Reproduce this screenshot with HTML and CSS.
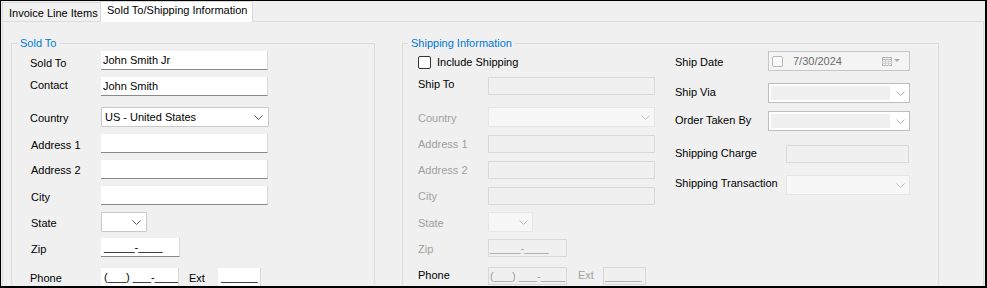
FILE: index.html
```html
<!DOCTYPE html>
<html>
<head>
<meta charset="utf-8">
<title>Sold To/Shipping Information</title>
<link rel="stylesheet" href="styles.css">
</head>
<body>
<div class="frame">
  <div class="tabs">
    <div class="tab">Invoice Line Items</div>
    <div class="tab active">Sold To/Shipping Information</div>
  </div>
  <div class="panel">
    <fieldset class="group sold">
      <legend>Sold To</legend>
      <div class="row mt1"><span class="lbl dy6">Sold To</span><div class="tb w167">John Smith Jr</div></div>
      <div class="row mt7"><span class="lbl dy2">Contact</span><div class="tb w167">John Smith</div></div>
      <div class="row mt11"><span class="lbl dy5">Country</span><div class="combo w168"><span class="val">US - United States</span><svg class="chev" width="9" height="5" viewBox="0 0 9 5"><polyline points="0.5,0.5 4.5,4.5 8.5,0.5" fill="none" stroke="#5a5a5a" stroke-width="1"/></svg></div></div>
      <div class="row mt7"><span class="lbl dy5 x1">Address 1</span><div class="tb w167"></div></div>
      <div class="row mt7"><span class="lbl dy4 x1">Address 2</span><div class="tb w167"></div></div>
      <div class="row mt7"><span class="lbl dy5 x1">City</span><div class="tb w167"></div></div>
      <div class="row mt7"><span class="lbl dy5 x1">State</span><div class="combo w46"><span class="val"></span><svg class="chev" width="9" height="5" viewBox="0 0 9 5"><polyline points="0.5,0.5 4.5,4.5 8.5,0.5" fill="none" stroke="#5a5a5a" stroke-width="1"/></svg></div></div>
      <div class="row mt6"><span class="lbl dy5 x1">Zip</span><div class="tb w79 mask">_____-____</div></div>
      <div class="row mt11"><span class="lbl dy4">Phone</span><div class="tb w78 mask">(___) ___-____</div><span class="ext dy4">Ext</span><div class="tb w43 mask ext-box">______</div></div>
    </fieldset>

    <fieldset class="group ship">
      <legend>Shipping Information</legend>
      <div class="cols">
        <div class="col-a">
          <div class="row mt6 chkrow"><span class="chk"></span><span class="chk-lbl">Include Shipping</span></div>
          <div class="row mt8"><span class="lbl dy1">Ship To</span><div class="dtb w167"></div></div>
          <div class="row mt12"><span class="lbl dy5 dis">Country</span><div class="dcombo w167"><svg class="chev" width="9" height="5" viewBox="0 0 9 5"><polyline points="0.5,0.5 4.5,4.5 8.5,0.5" fill="none" stroke="#c4c4c4" stroke-width="1"/></svg></div></div>
          <div class="row mt8"><span class="lbl dy3 dis">Address 1</span><div class="dtb w167"></div></div>
          <div class="row mt8"><span class="lbl dy3 dis">Address 2</span><div class="dtb w167"></div></div>
          <div class="row mt8"><span class="lbl dy3 dis">City</span><div class="dtb w167"></div></div>
          <div class="row mt7"><span class="lbl dy5 dis">State</span><div class="dcombo w45"><svg class="chev" width="9" height="5" viewBox="0 0 9 5"><polyline points="0.5,0.5 4.5,4.5 8.5,0.5" fill="none" stroke="#c4c4c4" stroke-width="1"/></svg></div></div>
          <div class="row mt7"><span class="lbl dy4 dis">Zip</span><div class="dtb w79 dmask">_____-____</div></div>
          <div class="row mt10"><span class="lbl dy2">Phone</span><div class="dtb w79 dmask">(___) ___-____</div><span class="ext2 dy2 dis">Ext</span><div class="dtb w43 dmask">______</div></div>
        </div>
        <div class="col-b">
          <div class="row mt1"><span class="rlbl dy5">Ship Date</span>
            <div class="date w142">
              <span class="dchk"></span>
              <span class="dval">7/30/2024</span>
              <svg class="cal" width="19" height="9" viewBox="0 0 19 9">
                <rect x="0.5" y="0.5" width="9" height="8" fill="#f4f4f4" stroke="#b4b4b4"/>
                <line x1="0" y1="2.5" x2="10" y2="2.5" stroke="#b4b4b4"/>
                <line x1="0" y1="4.5" x2="10" y2="4.5" stroke="#d0d0d0"/>
                <line x1="0" y1="6.5" x2="10" y2="6.5" stroke="#d0d0d0"/>
                <line x1="3.5" y1="2" x2="3.5" y2="9" stroke="#d0d0d0"/>
                <line x1="6.5" y1="2" x2="6.5" y2="9" stroke="#d0d0d0"/>
                <polygon points="12,2 18,2 15,5" fill="#a8a8a8"/>
              </svg>
            </div>
          </div>
          <div class="row mt12"><span class="rlbl dy3">Ship Via</span><div class="rcombo w142"><span class="inner"></span><svg class="chev" width="9" height="5" viewBox="0 0 9 5"><polyline points="0.5,0.5 4.5,4.5 8.5,0.5" fill="none" stroke="#b0b0b0" stroke-width="1"/></svg></div></div>
          <div class="row mt8"><span class="rlbl dy3">Order Taken By</span><div class="rcombo w142"><span class="inner"></span><svg class="chev" width="9" height="5" viewBox="0 0 9 5"><polyline points="0.5,0.5 4.5,4.5 8.5,0.5" fill="none" stroke="#b0b0b0" stroke-width="1"/></svg></div></div>
          <div class="row mt14"><span class="rlbl wide dy2">Shipping Charge</span><div class="dtb w123"></div></div>
          <div class="row mt12"><span class="rlbl wide dy2">Shipping Transaction</span><div class="dcombo w124"><svg class="chev" width="9" height="5" viewBox="0 0 9 5"><polyline points="0.5,0.5 4.5,4.5 8.5,0.5" fill="none" stroke="#c4c4c4" stroke-width="1"/></svg></div></div>
        </div>
      </div>
    </fieldset>
  </div>
</div>
</body>
</html>
```

FILE: styles.css
```css
* { box-sizing: border-box; }
html, body { margin: 0; padding: 0; }
body {
  font-family: "Liberation Sans", Arial, sans-serif;
  font-size: 11px;
  line-height: 13px;
  color: #000;
  background: #fff;
}

.frame {
  width: 987px;
  height: 288px;
  border-style: solid;
  border-color: #000;
  border-width: 1px 2px 2px 1px;
  background: #f0f0f0;
  overflow: hidden;
}

/* tabs */
.tabs {
  display: flex;
  align-items: flex-end;
  height: 20px;
  padding-left: 1px;
}
.tab {
  height: 19px;
  width: 99px;
  border: 1px solid #d9d9d9;
  border-bottom: none;
  padding: 4px 0 0 6px;
  background: #f0f0f0;
  white-space: nowrap;
}
.tab.active {
  position: relative;
  z-index: 1;
  width: 153px;
  height: 21px;
  margin-left: -1px;
  margin-bottom: -1px;
  padding-top: 2px;
  background: #fff;
}

/* panel */
.panel {
  margin-left: 1px;
  width: 982px;
  height: 300px;
  border: 1px solid #dcdcdc;
  display: flex;
  align-items: flex-start;
  gap: 27px;
  padding: 15px 0 0 8px;
}

.group {
  margin: 0;
  padding: 0;
  border: 1px solid #dcdcdc;
  min-width: 0;
  height: 300px;
}
.group legend {
  margin-left: 5px;
  padding: 0 3px;
  color: #0078d7;
  line-height: 13px;
}
.sold { width: 364px; }
.ship { width: 537px; }

.row { display: flex; align-items: flex-start; }
.mt1 { margin-top: 1px; }
.mt6 { margin-top: 6px; }
.mt7 { margin-top: 7px; }
.mt8 { margin-top: 8px; }
.mt10 { margin-top: 10px; }
.mt11 { margin-top: 11px; }
.mt12 { margin-top: 12px; }
.mt14 { margin-top: 14px; }

.dy1 { margin-top: 1px; }
.dy2 { margin-top: 2px; }
.dy3 { margin-top: 3px; }
.dy4 { margin-top: 4px; }
.dy5 { margin-top: 5px; }
.dy6 { margin-top: 6px; }

.lbl { flex: none; white-space: nowrap; }
.sold .lbl { width: 89px; padding-left: 18px; }
.sold .lbl.x1 { padding-left: 19px; }
.ship .lbl { width: 85px; padding-left: 15px; }
.dis { color: #a0a0a0; }

/* widths */
.w43 { width: 43px; }
.w45 { width: 45px; }
.w46 { width: 46px; }
.w78 { width: 78px; }
.w79 { width: 79px; }
.w123 { width: 123px; }
.w124 { width: 124px; }
.w142 { width: 142px; }
.w167 { width: 167px; }
.w168 { width: 168px; }

/* enabled textbox */
.tb {
  flex: none;
  height: 19px;
  background: #fff;
  border-bottom: 1px solid #8a8a8a;
  border-right: 1px solid #d8d8d8;
  padding: 3px 0 0 2px;
  white-space: nowrap;
  overflow: hidden;
}
.tb.mask { padding-left: 3px; }
.ext { flex: none; width: 29px; margin-left: 10px; }
.ext-box.mask { padding-left: 3px; }

/* enabled combobox */
.combo {
  flex: none;
  height: 20px;
  background: #fff;
  border: 1px solid #c9c9c9;
  border-radius: 1px;
  display: flex;
  align-items: center;
  padding: 0 5px 0 3px;
}
.combo .val { flex: 1; white-space: nowrap; }
.chev { flex: none; display: block; }

/* disabled textbox */
.dtb {
  flex: none;
  height: 18px;
  background: #f0f0f0;
  border: 1px solid #d9d9d9;
  padding: 2px 0 0 1px;
  white-space: nowrap;
  overflow: hidden;
}
.dmask { color: #a0a0a0; }
.ext2 { flex: none; width: 25px; margin-left: 11px; }

/* disabled combobox */
.dcombo {
  flex: none;
  height: 20px;
  background: #f7f7f7;
  border: 1px solid #e6e6e6;
  display: flex;
  align-items: center;
  justify-content: flex-end;
  padding-right: 4px;
}

/* shipping columns */
.cols { display: flex; align-items: flex-start; }
.col-a { width: 272px; flex: none; }
.chkrow { padding-left: 15px; }
.chk {
  flex: none;
  width: 13px;
  height: 13px;
  border: 1px solid #333;
  border-radius: 2px;
  background: #fff;
}
.chk-lbl { margin-left: 6px; white-space: nowrap; }

.col-b { flex: none; }
.rlbl { flex: none; width: 93px; white-space: nowrap; }
.rlbl.wide { width: 111px; }

/* date picker */
.date {
  flex: none;
  height: 20px;
  border: 1px solid #c6c6c6;
  background: #f4f4f4;
  display: flex;
  align-items: center;
  padding: 0 8px 0 3px;
}
.dchk {
  flex: none;
  width: 11px;
  height: 11px;
  border: 1px solid #b8b8b8;
  border-radius: 2px;
  background: #fafafa;
}
.dval { flex: 1; margin-left: 10px; color: #6d6d6d; }
.cal { flex: none; display: block; }

/* read-only dropdown */
.rcombo {
  flex: none;
  height: 20px;
  border: 1px solid #bdbdbd;
  background: #fff;
  display: flex;
  align-items: center;
  padding: 2px 4px 2px 2px;
}
.rcombo .inner {
  flex: none;
  width: 119px;
  height: 14px;
  background: #f0f0f0;
}
.rcombo .chev { margin-left: auto; }
```
